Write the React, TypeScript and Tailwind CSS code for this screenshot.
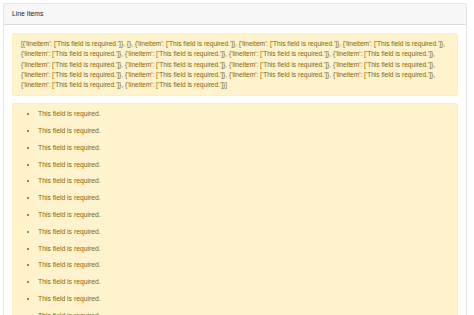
const required = "['This field is required.']";

function buildErrors(): string {
  const parts: string[] = [];
  for (let i = 0; i < 19; i++) {
    parts.push(i === 1 ? "{}" : `{'lineitem': ${required}}`);
  }
  return "[" + parts.join(", ") + "]";
}

const messages = Array.from({ length: 14 }, () => "This field is required.");

export default function App() {
  return (
    <div
      className="min-h-[315px] bg-white px-[3px] pt-[3px] text-[6.8px] leading-[10.2px] text-[#212529]"
      style={{ fontFamily: '"Liberation Sans", Arial, sans-serif' }}
    >
      <div className="w-[464px] rounded-[2px] border border-black/10">
        <div className="border-b border-black/10 bg-black/[0.03] px-[8px] py-[5px]">
          Line Items
        </div>
        <div className="px-[8px] pt-[8px]">
          <div className="mb-[7px] rounded-[2px] border border-[#ffeeba] bg-[#fff3cd] py-[5px] pl-[8px] pr-[6px] text-[6.6px] text-[#856404]">
            {buildErrors()}
          </div>
          <div className="rounded-[2px] border border-[#ffeeba] bg-[#fff3cd] px-[8px] py-[5px] text-[#856404]">
            <ul className="list-disc pl-[17px]">
              {messages.map((m, i) => (
                <li key={i} className="mb-[6.6px]">
                  {m}
                </li>
              ))}
            </ul>
          </div>
        </div>
      </div>
    </div>
  );
}
